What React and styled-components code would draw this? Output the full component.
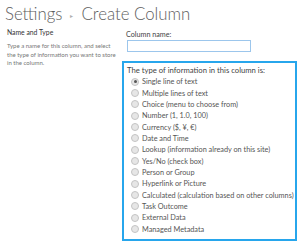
import React from "react";
import styled, { createGlobalStyle } from "styled-components";

const GlobalStyle = createGlobalStyle`
  body {
    margin: 0;
    background: #fff;
    font-family: Lato, "Liberation Sans", sans-serif;
    color: #444;
  }
`;

const Page = styled.div`
  width: 300px;
  height: 246px;
  overflow: hidden;
  padding: 2px 0 0 5px;
  box-sizing: border-box;
`;

const Title = styled.div`
  font-size: 16.8px;
  font-weight: 300;
  line-height: 20px;
  color: #5e5e5e;
  white-space: nowrap;
  display: flex;
  align-items: center;
  gap: 8px;
`;

const Sep = styled.span`
  font-size: 6px;
  color: #b0b0b0;
  margin-top: 4px;
`;

const Section = styled.div`
  display: grid;
  grid-template-columns: 116px 176px;
`;

const Info = styled.div`
  padding: 2px 0 0 2px;
`;

const InfoTitle = styled.div`
  font-size: 6.8px;
  color: #333;
  line-height: 9px;
`;

const InfoText = styled.div`
  width: 112px;
  margin-top: 5px;
  font-size: 6px;
  line-height: 8.6px;
  color: #777;
`;

const Fields = styled.div`
  display: flex;
  flex-direction: column;
`;

const Label = styled.div`
  font-size: 7.2px;
  line-height: 9px;
  color: #444;
  margin: 4px 0 0 5px;
`;

const TextInput = styled.input`
  display: block;
  width: 124px;
  height: 12px;
  box-sizing: border-box;
  margin: 1px 0 0 6px;
  border: 1px solid #9cc6ec;
  outline: none;
  padding: 0 2px;
`;

const TypeBox = styled.div`
  margin-top: 9px;
  margin-left: 1px;
  height: 180px;
  box-sizing: border-box;
  border: 2px solid #27a6ec;
  padding: 2px 0 0 3px;
`;

const TypeHeading = styled.div`
  font-size: 7.7px;
  line-height: 10px;
  color: #444;
`;

const Options = styled.div`
  margin-top: 1px;
  display: flex;
  flex-direction: column;
`;

const Option = styled.label`
  display: flex;
  align-items: center;
  height: 11.35px;
  gap: 3px;
  padding-left: 4px;
  font-size: 7.3px;
  color: #555;
  white-space: nowrap;
`;

const Radio = styled.span`
  width: 6px;
  height: 6px;
  border-radius: 50%;
  border: 1px solid #c4c4c4;
  background: #e6e6e6;
  flex: none;
  display: flex;
  align-items: center;
  justify-content: center;
  &::after {
    content: "";
    width: 3px;
    height: 3px;
    border-radius: 50%;
    background: ${(p) => (p.checked ? "#555" : "transparent")};
  }
`;

const types = [
  "Single line of text",
  "Multiple lines of text",
  "Choice (menu to choose from)",
  "Number (1, 1.0, 100)",
  "Currency ($, ¥, €)",
  "Date and Time",
  "Lookup (information already on this site)",
  "Yes/No (check box)",
  "Person or Group",
  "Hyperlink or Picture",
  "Calculated (calculation based on other columns)",
  "Task Outcome",
  "External Data",
  "Managed Metadata",
];

const App = () => {
  return (
    <>
      <GlobalStyle />
      <Page>
        <Title>
          Settings <Sep>▸</Sep> Create Column
        </Title>
        <Section>
          <Info>
            <InfoTitle>Name and Type</InfoTitle>
            <InfoText>
              Type a name for this column, and select the type of information
              you want to store in the column.
            </InfoText>
          </Info>
          <Fields>
            <Label>Column name:</Label>
            <TextInput type="text" />
            <TypeBox>
              <TypeHeading>The type of information in this column is:</TypeHeading>
              <Options>
                {types.map((t, i) => (
                  <Option key={t}>
                    <Radio checked={i === 0} />
                    {t}
                  </Option>
                ))}
              </Options>
            </TypeBox>
          </Fields>
        </Section>
      </Page>
    </>
  );
};

export default App;
